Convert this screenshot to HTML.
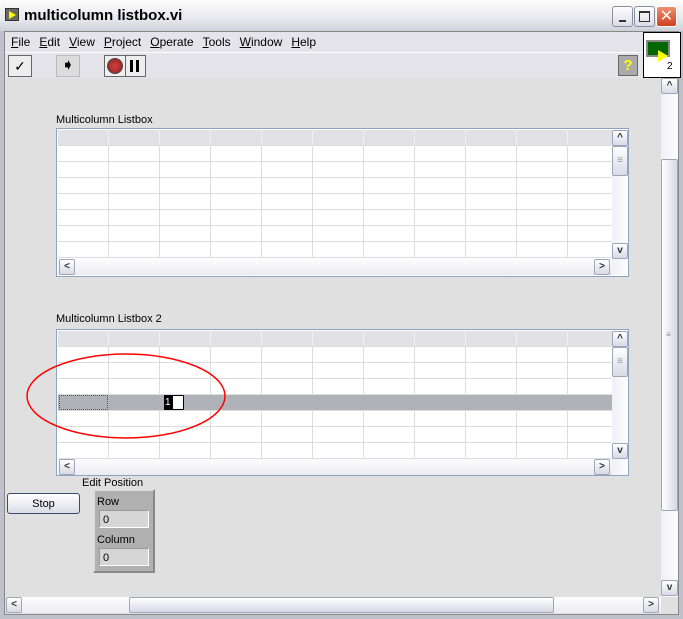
<!DOCTYPE html><html><head><style>
*{margin:0;padding:0;box-sizing:border-box}
body{width:683px;height:619px;overflow:hidden;background:#fff;font-family:"Liberation Sans",Tahoma,sans-serif;font-size:11px;position:relative}
.a{position:absolute}
.btn{background:linear-gradient(#fff,#dcdce6);border:1px solid #8a8fa0;border-radius:2px}
.lb{background:#fff;border:1px solid #8fa4bf}
.grid{position:absolute;left:1px;top:1px;width:554px;background-color:#fff;
background-image:linear-gradient(90deg,transparent 50px,#dcdcdc 50px,#dcdcdc 51px,transparent 51px),linear-gradient(transparent 15px,#dcdcdc 15px);
background-size:51px 100%,100% 16px}
.hdr{position:absolute;left:0;top:0;width:100%;height:15px;background:#e2e2e6;background-image:linear-gradient(90deg,transparent 50px,#f0f0f0 50px,#f0f0f0 51px,transparent 51px);background-size:51px 100%}
.vs{background:linear-gradient(90deg,#f0f0f5,#fdfdff)}
.hs{background:linear-gradient(#fdfdff,#ebebf2)}
.sb{position:absolute;width:16px;height:16px;background:linear-gradient(#fff,#d8dae6);border:1px solid #a0a6b8;border-radius:2px;font-size:10px;text-align:center;line-height:14px;color:#333;font-weight:bold}
.ind{background:#d6d6d6;border:1px solid #999;border-right-color:#fff;border-bottom-color:#fff;font-size:11px;padding-left:3px;line-height:18px}
</style></head><body>
<div class="a" style="left:0;top:0;width:683px;height:31px;background:linear-gradient(#fdfdfd,#e8e8ee 60%,#d0d0da);border-radius:6px 6px 0 0"></div>
<div class="a" style="left:5px;top:8px;width:14px;height:13px;background:#6a6a60;border:1px solid #333"><div class="a" style="left:3px;top:2px;width:0;height:0;border-left:7px solid #ff0;border-top:4px solid transparent;border-bottom:4px solid transparent"></div></div>
<div class="a" style="left:24px;top:7px;font-size:15px;font-weight:bold;color:#000">multicolumn listbox.vi</div>
<div class="a btn" style="left:612px;top:6px;width:21px;height:21px;border-radius:3px"><div class="a" style="left:6px;top:13px;width:7px;height:2px;background:#333"></div></div>
<div class="a btn" style="left:634px;top:6px;width:21px;height:21px;border-radius:3px"><div class="a" style="left:4px;top:4px;width:11px;height:11px;border:1px solid #333;border-top-width:2px"></div></div>
<div class="a" style="left:656px;top:6px;width:21px;height:21px;border-radius:3px;background:linear-gradient(#f09070,#d04020);border:1px solid #fff;color:#fff;font-size:16px;text-align:center;line-height:19px">✕</div>
<div class="a" style="left:0;top:31px;width:683px;height:588px;background:#c0c0cc"></div>
<div class="a" style="left:4px;top:31px;width:675px;height:584px;background:#e0e0e0;border:1px solid #888"></div>
<div class="a" style="left:5px;top:32px;width:638px;height:20px;background:#e4e4ea"></div>
<div class="a" style="left:11px;top:35px;font-size:12px">
<span style="margin-right:9px"><u>F</u>ile</span><span style="margin-right:9px"><u>E</u>dit</span><span style="margin-right:9px"><u>V</u>iew</span><span style="margin-right:9px"><u>P</u>roject</span><span style="margin-right:9px"><u>O</u>perate</span><span style="margin-right:9px"><u>T</u>ools</span><span style="margin-right:9px"><u>W</u>indow</span><span><u>H</u>elp</span></div>
<div class="a" style="left:5px;top:52px;width:638px;height:26px;background:#e4e4ea;border-top:1px solid #fff"></div>
<div class="a" style="left:8px;top:55px;width:24px;height:22px;border:1px solid #666;background:#eee;text-align:center;font-size:14px;line-height:20px">✓</div>
<div class="a" style="left:56px;top:55px;width:24px;height:22px;border:1px solid #bbb;background:#ddd;text-align:center;font-size:16px;line-height:20px">➧</div>
<div class="a" style="left:104px;top:55px;width:42px;height:22px;border:1px solid #666;background:#eee"></div>
<div class="a" style="left:107px;top:58px;width:16px;height:16px;border-radius:50%;background:radial-gradient(#d04040,#902020);border:1px solid #444"></div>
<div class="a" style="left:125px;top:56px;width:1px;height:20px;background:#666"></div>
<div class="a" style="left:130px;top:60px;width:3px;height:12px;background:#000"></div><div class="a" style="left:136px;top:60px;width:3px;height:12px;background:#000"></div>
<div class="a" style="left:618px;top:55px;width:20px;height:21px;border:1px solid #666;background:#aaa;color:#ff0;font-weight:bold;text-align:center;font-size:15px;line-height:19px">?</div>
<div class="a" style="left:643px;top:32px;width:38px;height:46px;background:#fff;border:1px solid #000"></div>
<div class="a" style="left:646px;top:40px;width:24px;height:17px;background:#060;border:2px solid #888"></div>
<div class="a" style="left:658px;top:50px;width:0;height:0;border-left:10px solid #ff0;border-top:6px solid transparent;border-bottom:6px solid transparent"></div>
<div class="a" style="left:667px;top:61px;font-size:10px">2</div>
<div class="a vs" style="left:661px;top:78px;width:17px;height:519px"></div>
<div class="sb" style="left:661px;top:78px;width:17px">^</div>
<div class="a" style="left:661px;top:159px;width:17px;height:352px;background:linear-gradient(90deg,#fff,#d6d8e6);border:1px solid #a0a6b8;border-radius:2px"></div>
<div class="a" style="left:666px;top:330px;font-size:8px;color:#888">≡</div>
<div class="sb" style="left:661px;top:580px;width:17px">v</div>
<div class="a hs" style="left:6px;top:597px;width:655px;height:16px"></div>
<div class="sb" style="left:6px;top:597px">&lt;</div>
<div class="a" style="left:129px;top:597px;width:425px;height:16px;background:linear-gradient(#fff,#d6d8e6);border:1px solid #a0a6b8;border-radius:2px"></div>
<div class="sb" style="left:643px;top:597px">&gt;</div>
<div class="a" style="left:56px;top:113px;line-height:14px;padding-top:0">Multicolumn Listbox</div>
<div class="a lb" style="left:56px;top:128px;width:573px;height:149px">
<div class="grid" style="height:128px"><div class="hdr"></div></div>
<div class="a vs" style="left:555px;top:1px;width:16px;height:145px"></div>
<div class="sb" style="left:555px;top:1px">^</div>
<div class="sb" style="left:555px;top:17px;height:30px;line-height:28px;color:#999">≡</div>
<div class="sb" style="left:555px;top:114px">v</div>
<div class="a hs" style="left:1px;top:130px;width:554px;height:16px"></div>
<div class="sb" style="left:2px;top:130px">&lt;</div>
<div class="sb" style="left:537px;top:130px">&gt;</div>
</div>
<div class="a" style="left:56px;top:312px;line-height:14px">Multicolumn Listbox 2</div>
<div class="a lb" style="left:56px;top:329px;width:573px;height:147px">
<div class="grid" style="height:128px"><div class="hdr"></div>
<div class="a" style="left:0;top:64px;width:554px;height:15px;background:#b0b2ba"></div>
<div class="a" style="left:1px;top:64px;width:49px;height:15px;border:1px dotted #555"></div>
<div class="a" style="left:106px;top:64px;width:20px;height:15px;background:#fff;border:1px solid #000"><div class="a" style="left:0;top:0;width:8px;height:13px;background:#000;color:#fff;font-size:10px;line-height:13px">1</div></div>
</div>
<div class="a vs" style="left:555px;top:1px;width:16px;height:144px"></div>
<div class="sb" style="left:555px;top:1px">^</div>
<div class="sb" style="left:555px;top:17px;height:30px;line-height:28px;color:#999">≡</div>
<div class="sb" style="left:555px;top:113px">v</div>
<div class="a hs" style="left:1px;top:129px;width:554px;height:16px"></div>
<div class="sb" style="left:2px;top:129px">&lt;</div>
<div class="sb" style="left:537px;top:129px">&gt;</div>
</div>
<svg class="a" style="left:24px;top:352px" width="208" height="90"><ellipse cx="102" cy="44" rx="99" ry="42" fill="none" stroke="#f00" stroke-width="1.5"/></svg>
<div class="a btn" style="left:7px;top:493px;width:73px;height:21px;text-align:center;line-height:20px;border-color:#3c4a70;border-radius:3px">Stop</div>
<div class="a" style="left:82px;top:476px;line-height:14px">Edit Position</div>
<div class="a" style="left:93px;top:489px;width:62px;height:84px;background:#b0b0b0;border:2px solid;border-color:#ddd #888 #888 #ddd"></div>
<div class="a" style="left:97px;top:495px;line-height:14px">Row</div>
<div class="a ind" style="left:99px;top:510px;width:50px;height:18px">0</div>
<div class="a" style="left:97px;top:533px;line-height:14px">Column</div>
<div class="a ind" style="left:99px;top:548px;width:50px;height:18px">0</div>
</body></html>
